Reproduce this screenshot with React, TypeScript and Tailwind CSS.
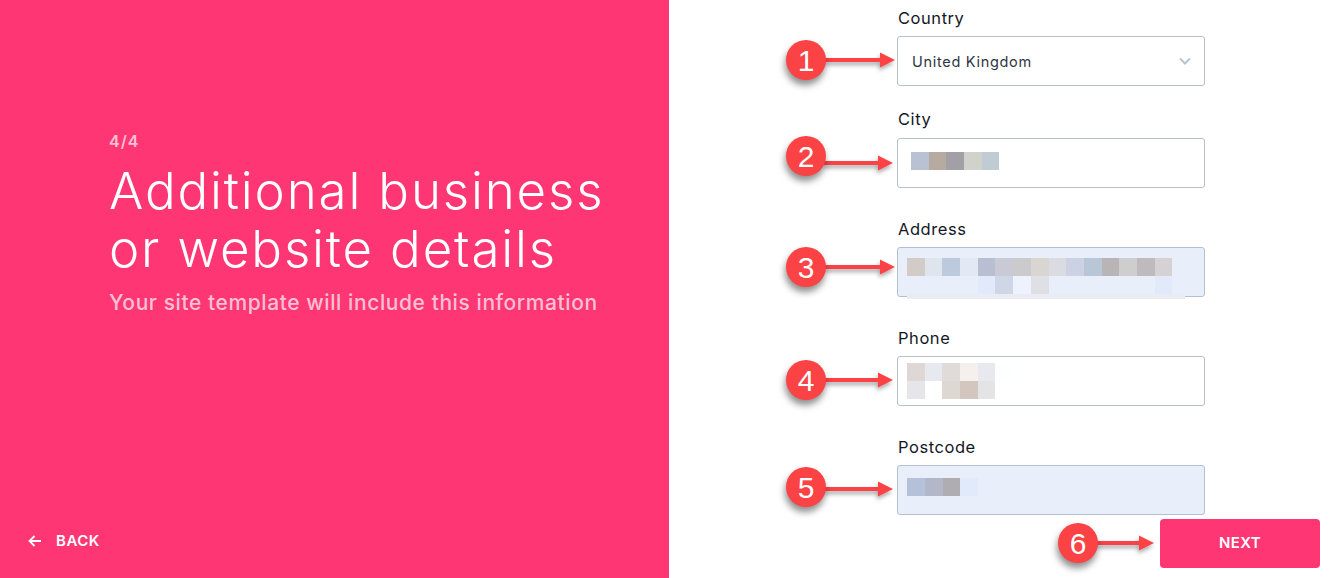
const font = "font-['Inter','Liberation_Sans',sans-serif]";

function Callout({ n, x, y, len, tipDy = 0 }: { n: number; x: number; y: number; len: number; tipDy?: number }) {
  // x,y = badge centre relative to the field's top-left corner; len = distance from centre to arrow tip
  const c = 20 + tipDy;
  return (
    <div className="absolute pointer-events-none" style={{ left: x - 20, top: y - 20 }}>
      <svg width={len + 40} height="50" className="absolute left-[20px] top-0 overflow-visible">
        <defs>
          <filter id={`s${n}`} x="-20%" y="-100%" width="140%" height="400%">
            <feDropShadow dx="-1" dy="3" stdDeviation="2" floodColor="#000" floodOpacity="0.35" />
          </filter>
        </defs>
        <path
          d={`M18 ${c - 2} L${len - 15} ${c - 2} L${len - 15} ${c - 7.5} L${len} ${c} L${len - 15} ${c + 7.5} L${len - 15} ${c + 2} L18 ${c + 2} Z`}
          fill="#fb4245"
          filter={`url(#s${n})`}
        />
      </svg>
      <div className="relative w-10 h-10 rounded-full bg-[#fb4245] shadow-[-1px_5px_7px_rgba(0,0,0,0.45)] flex items-center justify-center text-white text-[30px] font-normal tracking-normal font-['Liberation_Sans',sans-serif]">
        {n}
      </div>
    </div>
  );
}

function Cells({ rows, w = 17.7, h = 18 }: { rows: string[][]; w?: number; h?: number }) {
  return (
    <div className="flex flex-col shrink-0">
      {rows.map((row, i) => (
        <div key={i} className="flex">
          {row.map((c, j) => (
            <div key={j} style={{ width: w, height: h, background: c }} />
          ))}
        </div>
      ))}
    </div>
  );
}

function Field({
  label,
  n,
  badgeY,
  len = 89,
  tipDy = 0,
  className = "",
  gapClass = "mt-2",
  boxClass = "bg-white",
  children,
}: {
  label: string;
  n: number;
  badgeY: number;
  len?: number;
  tipDy?: number;
  className?: string;
  gapClass?: string;
  boxClass?: string;
  children?: React.ReactNode;
}) {
  return (
    <div className={className}>
      <div className="h-5 leading-5 text-[16.5px] tracking-[0.55px] text-[#14181f] pl-px">{label}</div>
      <div className={`relative h-[50px] border border-[#b4c0cf] rounded-[3px] ${gapClass} ${boxClass}`}>
        {children}
        <Callout n={n} x={-92} y={badgeY} len={len} tipDy={tipDy} />
      </div>
    </div>
  );
}

const t = "transparent";

export default function App() {
  return (
    <div className={`flex w-[1332px] h-[578px] overflow-hidden bg-white ${font}`}>
      <div className="w-[669px] h-full bg-[#ff3674] flex flex-col text-white">
        <div className="pl-[109px] pt-[131px]">
          <div className="text-[16px] leading-5 font-semibold tracking-[1px] text-white/70">4/4</div>
          <h1 className="mt-[11px] text-[51px] leading-[58px] font-light tracking-[1.85px]">
            Additional business
            <br />
            or website details
          </h1>
          <p className="mt-[11px] text-[21px] leading-7 font-medium tracking-[0.58px] text-white/70">Your site template will include this information</p>
        </div>
        <div className="mt-auto pl-[28px] pb-[27px] flex items-center gap-[14px]">
          <svg width="14" height="12" viewBox="0 0 14 12" fill="none" stroke="white" strokeWidth="1.8">
            <path d="M13 6H1.5M6.5 1L1.5 6l5 5" />
          </svg>
          <span className="text-[15px] leading-5 font-semibold tracking-[0.5px]">BACK</span>
        </div>
      </div>

      <div className="flex-1 flex flex-col pt-2 pr-3">
        <div className="ml-[228px] w-[308px]">
          <Field label="Country" n={1} badgeY={23}>
            <div className="h-full flex items-center justify-between pl-[14px] pr-[13px]">
              <span className="pt-0.5 text-[14.5px] tracking-[0.7px] text-[#2d3542]">United Kingdom</span>
              <svg width="12" height="8" viewBox="0 0 12 8" fill="none" stroke="#b8c3cf" strokeWidth="2">
                <path d="M1 1.5l5 5 5-5" />
              </svg>
            </div>
          </Field>
          <Field label="City" n={2} badgeY={17} len={87} tipDy={7} className="mt-[23px]" gapClass="mt-[9px]">
            <div className="h-full pl-[13px] pt-[13px]">
              <Cells rows={[["#b8c2d2", "#b7aaa0", "#a2a0a6", "#d0d2cc", "#c0ccd4"]]} />
            </div>
          </Field>
          <Field label="Address" n={3} badgeY={19} tipDy={0} className="mt-[31px]" boxClass="bg-[#e8effb]">
            <div className="h-full pl-[9px] pt-[10px] flex flex-col">
              <Cells
                rows={[
                  ["#d2cbc7", "#dfe5ec", "#bdcade", "#e2e8f4", "#b9bfd3", "#c9cad6", "#cbcbce", "#d9d5d1", "#dadce2", "#ccd2e4", "#b9c6d8", "#b9b5b6", "#cfcecf", "#bfbabe", "#d6d2d3"],
                  [t, t, t, t, "#e0eafa", "#cfd6e6", "#eef2fc", "#dfe0e6", t, t, t, t, t, t, "#e0eafa"],
                ]}
              />
              <div className="w-[278px] h-[5px] shrink-0 bg-[#e9edf3]" />
            </div>
          </Field>
          <Field label="Phone" n={4} badgeY={23} len={87} className="mt-[31px]">
            <div className="h-full pl-[9px] pt-[6px]">
              <Cells
                rows={[
                  ["#dfd6d6", "#e7e9f1", "#e0dbd8", "#f5f0ee", "#e7e9ef", "#fdfefe"],
                  ["#e6e6ea", "#ffffff", "#ddd8d2", "#d2c6bf", "#e4e4e6"],
                ]}
              />
            </div>
          </Field>
          <Field label="Postcode" n={5} badgeY={21} len={87} tipDy={2} className="mt-[31px]" boxClass="bg-[#e8effb]">
            <div className="h-full pl-[9px] pt-[12px]">
              <Cells w={17.75} rows={[["#b5c1d9", "#b4b6c9", "#afacb2", "#e0eafa"]]} />
            </div>
          </Field>
        </div>
        <button className="relative self-end mt-1 w-40 h-[49px] rounded-[4px] bg-[#ff3674] text-white text-[15px] font-semibold tracking-[0.4px]">
          NEXT
          <span className="absolute left-[-82px] top-[24px] block">
            <Callout n={6} x={0} y={0} len={76} />
          </span>
        </button>
      </div>
    </div>
  );
}
